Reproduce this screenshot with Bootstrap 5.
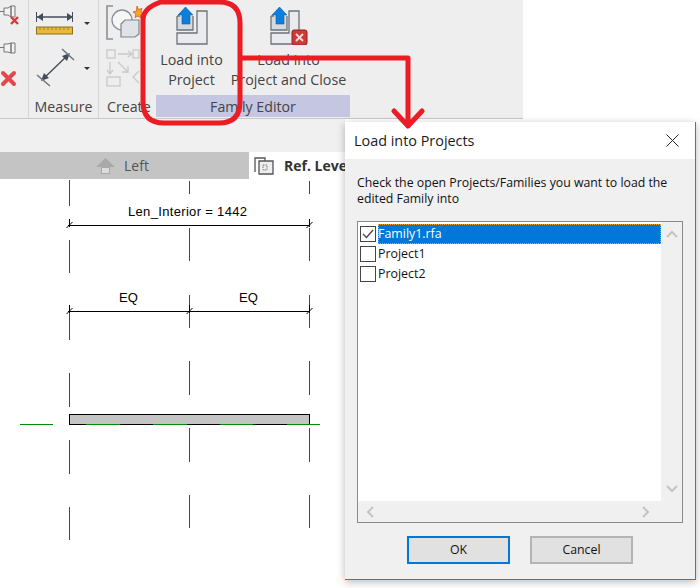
<!DOCTYPE html>
<html lang="en">

<head>
  <meta charset="UTF-8">
  <title>Load into Projects</title>
  <link href="https://cdn.jsdelivr.net/npm/bootstrap@5.3.0/dist/css/bootstrap.min.css" rel="stylesheet">
  <style>
    body {
      width: 700px;
      height: 588px;
      overflow: hidden;
      position: relative;
      background: #fff;
      font-family: "Open Sans", "Noto Sans", sans-serif;
      color: #111;
    }

    /* ribbon */
    .ribbon {
      width: 523px;
      height: 119px;
      background: #eeeeee;
      border-bottom: 1px solid #c8c8c8;
    }

    .panel {
      height: 118px;
      border-right: 1px solid #d6d6d6;
    }

    .panel-mods { width: 29px; }
    .panel-measure { width: 70px; }
    .panel-create { width: 57px; border-right: 0; overflow: hidden; }
    .panel-family { width: 194px; border-right: 0; }

    .panel-title {
      height: 22px;
      line-height: 24px;
      margin-bottom: 1px;
      font-size: 14.2px;
      color: #444;
      white-space: nowrap;
    }

    .panel-family .panel-title { background: #c5c6e2; }

    .ribbon-btn {
      font-size: 14.3px;
      line-height: 20px;
      color: #444;
      white-space: nowrap;
    }

    .ribbon-btn svg { margin-top: 5px; margin-bottom: 5px; }
    .btn-load { width: 71px; }
    .btn-load-close { width: 123px; }

    /* strip under the ribbon + view tabs */
    .gap-strip { width: 345px; height: 33px; background: #f0f0f0; }

    .view-tabs {
      width: 345px;
      height: 27px;
      background: #c4c4c4;
      font-size: 14px;
    }

    .view-tab-left { width: 249px; color: #555; padding-left: 95px; }

    .view-tab-active {
      width: 96px;
      background: #fff;
      padding-left: 5px;
      font-weight: 700;
      color: #333;
      white-space: nowrap;
      gap: 10px;
    }

    .drawing { width: 345px; height: 409px; }
    .drawing text { font-family: "Liberation Sans", sans-serif; font-size: 13px; fill: #000; }
    .grid-line { stroke: #007a00; fill: none; }
    .ref-line { stroke: #008a00; fill: none; }

    /* dialog */
    .dlg {
      position: absolute;
      left: 345px;
      top: 122px;
      width: 351px;
      height: 458px;
      background: #f0f0f0;
      border-right: 1px solid #2a7fc4;
      border-bottom: 1px solid #2a7fc4;
      box-shadow: 0 2px 8px rgba(0, 0, 0, .28);
    }

    .dlg-title {
      height: 37px;
      background: #fff;
      font-size: 14.4px;
      padding-left: 9px;
      color: #1a1a1a;
    }

    .dlg-note {
      font-size: 12.3px;
      line-height: 16px;
      padding: 16px 12px 0;
      height: 62px;
      color: #111;
    }

    .list-box {
      width: 326px;
      height: 302px;
      margin-left: 12px;
      border: 1px solid #8a8a8a;
      background: #f0f0f0;
      font-size: 12.4px;
    }

    .list-main { width: 303px; height: 279px; background: #fff; padding-top: 2px; }
    .list-row { height: 20px; line-height: 20px; }

    .check-box {
      width: 16px;
      height: 16px;
      margin: 0 2px 0 2px;
      border: 1px solid #444;
      background: #fff;
      flex: none;
    }

    .list-label { flex: 1; }

    .list-row.selected .list-label {
      background: #0078d7;
      color: #fff;
      outline: 1px dotted #e8a33c;
      outline-offset: -1px;
    }

    .vscroll { width: 21px; height: 279px; }
    .hscroll { height: 21px; }

    .dlg-actions { padding: 13px 0 0 62px; gap: 20px; }

    .dlg-btn {
      width: 103px;
      height: 28px;
      padding: 1px 0 0;
      font-size: 12.3px;
      background: #e1e1e1;
      border: 2px solid #b4b4b4;
      border-radius: 0;
      color: #111;
    }

    .dlg-btn.default-btn { border-color: #0078d7; }

    .overlay {
      position: absolute;
      left: 0;
      top: 0;
      pointer-events: none;
    }
  </style>
</head>

<body>
  <div class="ribbon d-flex">
    <div class="panel panel-mods d-flex flex-column align-items-center">
      <svg width="28" height="95" viewBox="0 0 28 95">
        <g fill="#f2f2f2" stroke="#777" stroke-width="1">
          <path d="M0 11.5h4M4 8h4l3-2v11l-3-2H4zM11 6h4v11h-4z" />
          <path d="M0 47.5h4M4 44h4l3-1v10l-3-1H4zM11 43h4v10h-4z" />
        </g>
        <path d="M11 17l7 7M18 17l-7 7" stroke="#d8393a" stroke-width="2.4" />
        <path d="M3 73l11 11M14 73L3 84" stroke="#e4474a" stroke-width="4" stroke-linecap="round" />
      </svg>
    </div>

    <div class="panel panel-measure d-flex flex-column">
      <svg class="flex-grow-1" width="69" height="95" viewBox="0 0 69 95">
        <path d="M8 17h35" stroke="#444d57" stroke-width="1.4" />
        <path d="M8 17l6-4v8zM44 17l-6-4v8z" fill="#444d57" />
        <path d="M7.500 12v10M43.500 12v10" stroke="#444d57" />
        <rect x="7.500" y="27" width="36" height="7" fill="#e8b93a" stroke="#8a7020" />
        <path d="M11 27v3M15 27v3M19 27v3M23 27v3M27 27v3M31 27v3M35 27v3M39 27v3" stroke="#8a7020" stroke-width=".7" />
        <path d="M55 22h6l-3 3z" fill="#333" />
        <path d="M14 79l25-24" stroke="#444d57" stroke-width="1.4" />
        <path d="M12 81l3-8 5 5zM41 53l-3 8-5-5z" fill="#444d57" />
        <path d="M8 75l13 11M33 49l12 11" stroke="#6f7780" stroke-width="1.6" />
        <path d="M55 67h6l-3 3z" fill="#333" />
      </svg>
      <div class="panel-title text-center">Measure</div>
    </div>

    <div class="panel panel-create d-flex flex-column">
      <svg class="flex-grow-1" width="57" height="95" viewBox="0 0 57 95">
        <path d="M14 6H8v33h6" fill="none" stroke="#8b8f94" stroke-width="1.6" />
        <circle cx="23" cy="20" r="10" fill="#f6f6f6" stroke="#8b8f94" stroke-width="1.3" />
        <path d="M22 24l4-4h14v14l-4 3H22z" fill="#dfe3e8" stroke="#7f868d" stroke-width="1.2" />
        <path d="M38 6l1.500 3.500 3.500-1-1 3.500 3 2-3.500 1 .5 3-3-2-3 1.500 1-3.500-3-2 3.500-1z" fill="#f5a623" stroke="#d9541e" stroke-width=".8" />
        <g fill="none" stroke="#c9c9c9" stroke-width="1.3">
          <rect x="8" y="50" width="8" height="8" />
          <rect x="34" y="50" width="6" height="8" />
          <rect x="8" y="77" width="13" height="9" />
          <path d="M19 54h13M29 51l4 3-4 3M11 62v11M8 70l3 4 3-4M19 62l10 10M29 66v6h-6M40 71l-6 6 6 6" />
        </g>
      </svg>
      <div class="panel-title ps-2">Create</div>
    </div>

    <div class="panel panel-family d-flex flex-column">
      <div class="d-flex flex-grow-1">
        <div class="ribbon-btn btn-load text-center">
          <svg class="d-block mx-auto" width="34" height="40" viewBox="0 0 34 40">
            <path d="M2 28h20V6h10v33H2z" fill="#e9ebee" stroke="#6d7379" stroke-width="1.3" />
            <path d="M2 11h3M2 11v14h16V11" fill="#d6d9dd" stroke="#6d7379" stroke-width="1.3" />
            <path d="M10.500 2L3 10h4v9h8v-9h3z" fill="#0b7fdc" stroke="#0a5ea5" stroke-width=".6" />
          </svg>
          Load into<br>Project
        </div>
        <div class="ribbon-btn btn-load-close text-center">
          <svg class="d-block mx-auto" width="40" height="40" viewBox="0 0 40 40">
            <path d="M2 28h18V6h10v33H2z" fill="#e9ebee" stroke="#6d7379" stroke-width="1.3" />
            <path d="M2 11h3M2 11v14h16V11" fill="#d6d9dd" stroke="#6d7379" stroke-width="1.3" />
            <path d="M10.500 2L3 10h4v9h8v-9h3z" fill="#0b7fdc" stroke="#0a5ea5" stroke-width=".6" />
            <rect x="23" y="25" width="15" height="15" rx="2" fill="#cf3a37" stroke="#8e2321" />
            <path d="M27 29l7 7M34 29l-7 7" stroke="#f4dcdc" stroke-width="1.8" />
          </svg>
          Load into<br>Project and Close
        </div>
      </div>
      <div class="panel-title text-center">Family Editor</div>
    </div>
  </div>

  <div class="gap-strip"></div>

  <div class="view-tabs d-flex">
    <div class="view-tab-left d-flex align-items-center gap-2">
      <svg width="21" height="18" viewBox="0 0 21 18">
        <path d="M10.500 1L1 10h5v7h9v-7h5z" fill="#a9a9a9" />
        <rect x="7" y="11" width="7" height="5" fill="#dcdcdc" />
      </svg>
      <span>Left</span>
    </div>
    <div class="view-tab-active d-flex align-items-center">
      <svg class="flex-shrink-0" width="20" height="18" viewBox="0 0 20 18">
        <path d="M1 15V1h10v3" fill="#fff" stroke="#555" stroke-width="1.3" />
        <path d="M5 4h14v13H5z" fill="#eee" stroke="#555" stroke-width="1.3" />
        <path d="M9 8h4v5H9z" fill="none" stroke="#777" stroke-dasharray="1.500 1" />
      </svg>
      <span>Ref. Level</span>
    </div>
  </div>

  <svg class="drawing d-block" viewBox="0 179 345 409" shape-rendering="crispEdges">
    <path class="grid-line" d="M69.500 180v26M69.500 240v33M69.500 307v33M69.500 373v34M69.500 440v34M69.500 507v33" />
    <path class="grid-line" d="M189.500 181v13M189.500 228v33M189.500 295v33M189.500 361v34M189.500 428v34M189.500 495v33" />
    <path class="grid-line" d="M309.500 181v13M309.500 228v33M309.500 295v33M309.500 361v34M309.500 428v34M309.500 495v33" />
    <rect x="69.500" y="414.500" width="240" height="10" fill="#c4c4c4" stroke="#000" />
    <path class="ref-line" d="M20 424.500h33M86 424.500h34M153 424.500h34M220 424.500h33M287 424.500h33" />
    <g stroke="#000" fill="none">
      <path d="M68 225.500h242M69.500 219v8M309.500 219v8" />
      <path d="M68 311.500h242M69.500 305v8M189.500 305v8M309.500 305v8" />
    </g>
    <g stroke="#000" fill="none" shape-rendering="auto">
      <path d="M66.500 228l6-6M306.500 228l6-6M66.500 314l6-6M186.500 314l6-6M306.500 314l6-6" />
    </g>
    <text x="187.500" y="216" text-anchor="middle" textLength="119">Len_Interior = 1442</text>
    <text x="128.500" y="302" text-anchor="middle">EQ</text>
    <text x="248.500" y="302" text-anchor="middle">EQ</text>
  </svg>

  <div class="dlg">
    <div class="dlg-title d-flex align-items-center justify-content-between">
      <span>Load into Projects</span>
      <svg class="me-3" width="13" height="13" viewBox="0 0 13 13">
        <path d="M.5.500l12 12M12.500.500l-12 12" stroke="#222" stroke-width="1" />
      </svg>
    </div>
    <div class="dlg-note">Check the open Projects/Families you want to load the<br>edited Family into</div>
    <div class="list-box">
      <div class="d-flex">
        <div class="list-main">
          <div class="list-row selected d-flex align-items-center">
            <span class="check-box d-flex align-items-center justify-content-center">
              <svg width="12" height="10" viewBox="0 0 12 10">
                <path d="M1 5l3.500 3.500L11 1" fill="none" stroke="#444" stroke-width="1.3" />
              </svg>
            </span>
            <span class="list-label">Family1.rfa</span>
          </div>
          <div class="list-row d-flex align-items-center">
            <span class="check-box"></span>
            <span class="list-label">Project1</span>
          </div>
          <div class="list-row d-flex align-items-center">
            <span class="check-box"></span>
            <span class="list-label">Project2</span>
          </div>
        </div>
        <div class="vscroll d-flex flex-column align-items-center justify-content-between py-2">
          <svg width="12" height="8" viewBox="0 0 12 8"><path d="M1 7l5-5 5 5" fill="none" stroke="#c4c4c4" stroke-width="2" /></svg>
          <svg width="12" height="8" viewBox="0 0 12 8"><path d="M1 1l5 5 5-5" fill="none" stroke="#c4c4c4" stroke-width="2" /></svg>
        </div>
      </div>
      <div class="hscroll d-flex align-items-center justify-content-between px-2 me-4">
        <svg width="8" height="12" viewBox="0 0 8 12"><path d="M7 1L2 6l5 5" fill="none" stroke="#c4c4c4" stroke-width="2" /></svg>
        <svg width="8" height="12" viewBox="0 0 8 12"><path d="M1 1l5 5-5 5" fill="none" stroke="#c4c4c4" stroke-width="2" /></svg>
      </div>
    </div>
    <div class="d-flex dlg-actions">
      <button type="button" class="btn dlg-btn default-btn">OK</button>
      <button type="button" class="btn dlg-btn">Cancel</button>
    </div>
  </div>

  <!-- red markup drawn over the screenshot -->
  <svg class="overlay" width="700" height="588" viewBox="0 0 700 588">
    <g fill="none" stroke="#ed1c24" stroke-width="5" stroke-linecap="round" stroke-linejoin="round">
      <path d="M161 2h58q21 0 21 21v79q0 21-21 21h-55q-21 0-21-21V20q0-12 18-18z" />
      <path d="M241 58h167v68M394 111l14 15 14-15" />
    </g>
  </svg>
</body>

</html>
